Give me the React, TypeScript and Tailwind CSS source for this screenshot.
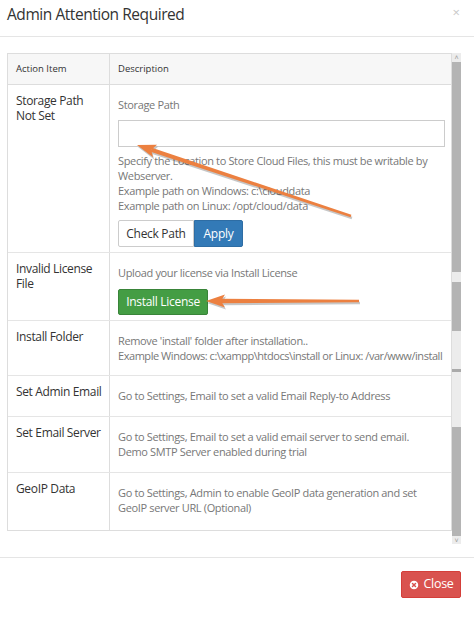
import { XCircle } from "lucide-react";

type Row = {
  label: string[];
  height: string;
  body: React.ReactNode;
};

const rows: Row[] = [
  {
    label: ["Storage Path", "Not Set"],
    height: "h-[168px]",
    body: (
      <div className="flex flex-col">
        <p className="leading-[15px]">Storage Path</p>
        <div className="mt-[8px] h-[27px] w-full border border-[#cccccc] bg-white" />
        <p className="mt-[6px] leading-[15px]">
          Specify the Location to Store Cloud Files, this must be writable by Webserver.
          <br />
          Example path on Windows: c:\clouddata
          <br />
          Example path on Linux: /opt/cloud/data
        </p>
        <div className="mt-[7px] flex">
          <button className="h-[27px] w-[76px] rounded-l-[2px] border border-[#cccccc] bg-white text-[12px] tracking-[-0.3px] text-[#333333]">
            Check Path
          </button>
          <button className="h-[27px] w-[49px] rounded-r-[2px] border border-[#2e6da4] bg-[#337ab7] text-[12px] tracking-[-0.3px] text-white">
            Apply
          </button>
        </div>
      </div>
    ),
  },
  {
    label: ["Invalid License", "File"],
    height: "h-[68px]",
    body: (
      <div className="flex flex-col items-start">
        <p className="leading-[15px]">Upload your license via Install License</p>
        <button className="mt-[9px] h-[26px] w-[90px] rounded-[2px] border border-[#398439] bg-[#449d44] text-[12px] tracking-[-0.3px] text-white">
          Install License
        </button>
      </div>
    ),
  },
  {
    label: ["Install Folder"],
    height: "h-[55px]",
    body: (
      <p className="whitespace-nowrap leading-[15px]">
        Remove 'install' folder after installation..
        <br />
        <span className="tracking-[-0.45px]">Example Windows: c:\xampp\htdocs\install or Linux: /var/www/install</span>
      </p>
    ),
  },
  {
    label: ["Set Admin Email"],
    height: "h-[41px]",
    body: <p className="leading-[15px]">Go to Settings, Email to set a valid Email Reply-to Address</p>,
  },
  {
    label: ["Set Email Server"],
    height: "h-[56px]",
    body: (
      <p className="leading-[15px]">
        Go to Settings, Email to set a valid email server to send email.
        <br />
        Demo SMTP Server enabled during trial
      </p>
    ),
  },
  {
    label: ["GeoIP Data"],
    height: "h-[57px]",
    body: (
      <p className="leading-[15px]">
        Go to Settings, Admin to enable GeoIP data generation and set GeoIP server URL (Optional)
      </p>
    ),
  },
];

function Arrow({ x1, y1, x2, y2 }: { x1: number; y1: number; x2: number; y2: number }) {
  // tail (x1,y1) -> tip (x2,y2), shaft widens toward the head
  const dx = x2 - x1;
  const dy = y2 - y1;
  const len = Math.sqrt(dx * dx + dy * dy);
  const ux = dx / len;
  const uy = dy / len;
  const px = -uy;
  const py = ux;
  const headLen = 19;
  const headW = 6.5;
  const bx = x2 - ux * headLen;
  const by = y2 - uy * headLen;
  const nx = bx + ux * 4;
  const ny = by + uy * 4;
  const head = `${x2},${y2} ${bx + px * headW},${by + py * headW} ${nx},${ny} ${bx - px * headW},${by - py * headW}`;
  const shaft = `${x1 + px * 1.2},${y1 + py * 1.2} ${nx + px * 2.2},${ny + py * 2.2} ${nx - px * 2.2},${ny - py * 2.2} ${x1 - px * 1.2},${y1 - py * 1.2}`;
  return (
    <g>
      <g transform="translate(1,2)" fill="#000000" opacity="0.22">
        <polygon points={shaft} />
        <polygon points={head} />
      </g>
      <polygon points={shaft} fill="#ec8040" />
      <polygon points={head} fill="#ec8040" />
    </g>
  );
}

export default function App() {
  return (
    <div
      className="relative h-[618px] w-[474px] overflow-hidden bg-white text-[#333333]"
      style={{ fontFamily: '"Open Sans", "Liberation Sans", sans-serif' }}
    >
      <div className="flex h-[37px] items-start justify-between border-b border-[#e5e5e5] pl-[7px] pr-[14px] pt-[5px]">
        <h2 className="text-[15.5px] leading-[18px] tracking-[-0.45px] text-[#333333]">Admin Attention Required</h2>
        <span className="text-[13px] leading-[14px] text-[#c8c8c8]">×</span>
      </div>

      <div className="flex h-[521px] border-b border-[#e5e5e5] pb-[13px] pl-[7px] pr-[13px] pt-[16px]">
        <div className="min-w-0 flex-1 self-start border border-[#dddddd]">
          <div className="flex h-[31px] border-b border-[#dddddd] bg-[#f7f7f7] text-[9.5px]">
            <div className="flex w-[102px] items-center border-r border-[#dddddd] pl-[8px]">Action Item</div>
            <div className="flex items-center pl-[8px]">Description</div>
          </div>
          {rows.map((r, i) => (
            <div
              key={r.label.join(" ")}
              className={`flex ${r.height} ${i < rows.length - 1 ? "border-b border-[#e5e5e5]" : ""}`}
            >
              <div className="w-[102px] shrink-0 border-r border-[#dddddd] pl-[8px] pr-[2px] pt-[8px] text-[12px] leading-[15px] tracking-[-0.35px] text-[#333333]">
                {r.label.map((l) => (
                  <p key={l}>{l}</p>
                ))}
              </div>
              <div className="min-w-0 flex-1 pl-[8px] pr-[6px] pt-[12px] text-[11px] tracking-[-0.35px] text-[#777777]">
                {r.body}
              </div>
            </div>
          ))}
        </div>

        <div className="flex w-[9px] shrink-0 flex-col bg-[#ececec]">
          <div className="flex h-[9px] items-center justify-center text-[7px] leading-none text-[#9a9a9a]">˄</div>
          <div className="h-[210px] bg-[#b4b4b4]" />
          <div className="h-[10px]" />
          <div className="h-[50px] bg-[#b4b4b4]" />
          <div className="h-[38px]" />
          <div className="h-[3px] bg-[#aaaaaa]" />
          <div className="h-[55px]" />
          <div className="h-[109px] bg-[#b4b4b4]" />
          <div className="flex h-[8px] items-center justify-center text-[7px] leading-none text-[#9a9a9a]">˅</div>
        </div>
      </div>

      <div className="flex justify-end pr-[13px] pt-[13px]">
        <button className="flex h-[27px] w-[60px] items-center justify-center gap-[3px] rounded-[2px] border border-[#d43f3a] bg-[#d9534f] text-[12.5px] tracking-[-0.3px] text-white">
          <XCircle className="h-[12px] w-[12px]" fill="white" stroke="#d9534f" strokeWidth={3} />
          Close
        </button>
      </div>

      <svg className="pointer-events-none absolute left-0 top-0" width="474" height="618">
        <Arrow x1={351} y1={216} x2={137} y2={145} />
        <Arrow x1={359} y1={301} x2={206} y2={301} />
      </svg>
    </div>
  );
}
